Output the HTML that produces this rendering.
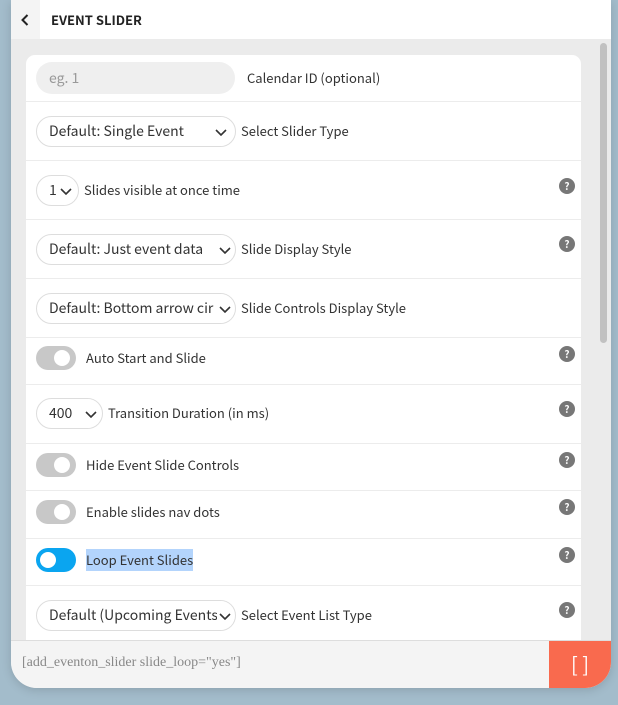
<!DOCTYPE html>
<html><head><meta charset="utf-8"><style>
*{box-sizing:border-box;margin:0;padding:0}
body{width:618px;height:705px;overflow:hidden;background:#a3bccb;font-family:"Noto Sans CJK SC","Liberation Sans",sans-serif;position:relative}
.panel{position:absolute;left:11px;top:0;width:600px;height:688px;background:#ebebeb;border-radius:0 0 26px 26px;overflow:hidden;box-shadow:0 2px 10px rgba(0,0,0,.15)}
.hdr{position:absolute;left:0;top:0;width:600px;height:39px;background:#fff}
.back{position:absolute;left:0;top:0;width:29px;height:39px;background:#f4f4f4}
.back svg{position:absolute;left:10px;top:14px}
.title{position:absolute;left:40px;top:10px;font-size:13px;font-weight:bold;color:#222}
.card{position:absolute;left:15px;top:55px;width:555px;height:600px;background:#fff;border-radius:9px}
.sb{position:absolute;left:589px;top:43px;width:7px;height:300px;background:#c1c1c1;border-radius:4px}
.line{position:absolute;left:15px;width:555px;height:1px;background:#ececec}
.abs{position:absolute}
.sel{position:absolute;height:31px;border:1px solid #ddd;border-radius:16px;background:#fff;font-size:14px;color:#333;line-height:29px;padding-left:12px;white-space:nowrap;overflow:hidden}
.chev{position:absolute;top:0;height:29px;width:16px;background:#fff}
.chev svg{position:absolute;left:2px;top:12px}
.lbl{position:absolute;font-size:13px;color:#333;white-space:nowrap}
.help{position:absolute;left:548px;width:16px;height:16px;border-radius:50%;background:#777;color:#fff;font-size:10px;font-weight:bold;text-align:center;line-height:16px}
.tg{position:absolute;left:25px;width:40px;height:24px;border-radius:12px;background:#c8c8c8}
.tg i{position:absolute;left:18px;top:4px;width:16px;height:16px;border-radius:50%;background:#fff}
.foot{position:absolute;left:0;top:640px;width:600px;height:48px;background:#f4f4f4;border-top:1px solid #ddd}
.ft{position:absolute;left:11px;top:14px;font-family:"Liberation Serif",serif;font-size:14px;color:#888}
.btn{position:absolute;left:538px;top:0;width:62px;height:48px;background:#f96a4e;color:#fff;font-size:20px;text-align:center;line-height:46px}
</style></head><body>
<div class="panel">
<div class="hdr"><div class="back"><svg width="8" height="12" viewBox="0 0 8 12"><polyline points="6.5,1 1.5,6 6.5,11" fill="none" stroke="#222" stroke-width="2"/></svg></div><div class="title">EVENT SLIDER</div></div>
<div class="card"></div>
<div class="sb"></div>
<div class="line" style="top:101px"></div>
<div class="line" style="top:160px"></div>
<div class="line" style="top:219px"></div>
<div class="line" style="top:278px"></div>
<div class="line" style="top:337px"></div>
<div class="line" style="top:384px"></div>
<div class="line" style="top:443px"></div>
<div class="line" style="top:490px"></div>
<div class="line" style="top:538px"></div>
<div class="line" style="top:585px"></div>

<div class="abs" style="left:25px;top:62px;width:199px;height:32px;border-radius:16px;background:#efefef;font-size:14px;color:#999;line-height:32px;padding-left:13px">eg. 1</div>
<div class="lbl" style="left:236px;top:68px">Calendar ID (optional)</div>

<div class="sel" style="left:25px;top:116px;width:200px">Default: Single Event<span class="chev" style="left:176px"><svg width="12" height="7" viewBox="0 0 12 7"><polyline points="1,1 6,6 11,1" fill="none" stroke="#333" stroke-width="1.6"/></svg></span></div>
<div class="lbl" style="left:230px;top:121px">Select Slider Type</div>

<div class="sel" style="left:25px;top:175px;width:43px">1<span class="chev" style="left:21px"><svg width="12" height="7" viewBox="0 0 12 7"><polyline points="1,1 6,6 11,1" fill="none" stroke="#333" stroke-width="1.6"/></svg></span></div>
<div class="lbl" style="left:73px;top:180px">Slides visible at once time</div>
<div class="help" style="top:178px">?</div>

<div class="sel" style="left:25px;top:234px;width:200px">Default: Just event data<span class="chev" style="left:180px"><svg width="12" height="7" viewBox="0 0 12 7"><polyline points="1,1 6,6 11,1" fill="none" stroke="#333" stroke-width="1.6"/></svg></span></div>
<div class="lbl" style="left:230px;top:239px">Slide Display Style</div>
<div class="help" style="top:236px">?</div>

<div class="sel" style="left:25px;top:293px;width:200px">Default: Bottom arrow cir<span class="chev" style="left:180px"><svg width="12" height="7" viewBox="0 0 12 7"><polyline points="1,1 6,6 11,1" fill="none" stroke="#333" stroke-width="1.6"/></svg></span></div>
<div class="lbl" style="left:230px;top:298px">Slide Controls Display Style</div>

<div class="tg" style="top:346px"><i></i></div>
<div class="lbl" style="left:75px;top:348px">Auto Start and Slide</div>
<div class="help" style="top:346px">?</div>

<div class="sel" style="left:25px;top:398px;width:67px">400<span class="chev" style="left:46px"><svg width="12" height="7" viewBox="0 0 12 7"><polyline points="1,1 6,6 11,1" fill="none" stroke="#333" stroke-width="1.6"/></svg></span></div>
<div class="lbl" style="left:97px;top:403px">Transition Duration (in ms)</div>
<div class="help" style="top:401px">?</div>

<div class="tg" style="top:453px"><i></i></div>
<div class="lbl" style="left:75px;top:455px">Hide Event Slide Controls</div>
<div class="help" style="top:452px">?</div>

<div class="tg" style="top:500px"><i></i></div>
<div class="lbl" style="left:75px;top:502px">Enable slides nav dots</div>
<div class="help" style="top:499px">?</div>

<div class="tg" style="top:548px;background:#0aa5f0"><i style="left:4px"></i></div>
<div class="lbl" style="left:75px;top:549px;background:#b3d4fc;padding:2px 0;line-height:18px">Loop Event Slides</div>
<div class="help" style="top:547px">?</div>

<div class="sel" style="left:25px;top:600px;width:200px">Default (Upcoming Events)<span class="chev" style="left:180px"><svg width="12" height="7" viewBox="0 0 12 7"><polyline points="1,1 6,6 11,1" fill="none" stroke="#333" stroke-width="1.6"/></svg></span></div>
<div class="lbl" style="left:230px;top:605px">Select Event List Type</div>
<div class="help" style="top:602px">?</div>

<div class="foot"><div class="ft">[add_eventon_slider slide_loop="yes"]</div><div class="btn">[ ]</div></div>
</div>
</body></html>
